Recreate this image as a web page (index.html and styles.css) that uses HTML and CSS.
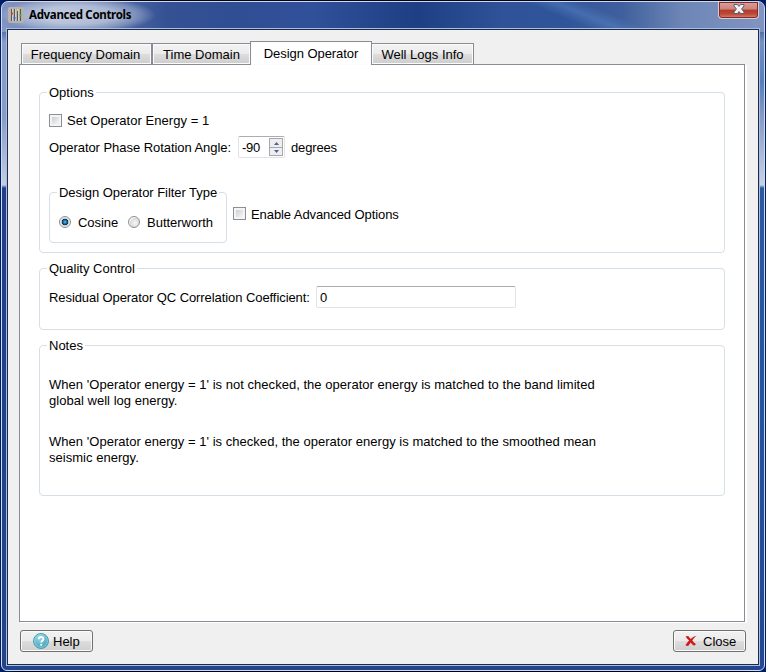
FILE: index.html
```
<!DOCTYPE html>
<html lang="en">
<head>
<meta charset="utf-8">
<title>Advanced Controls</title>
<link rel="stylesheet" href="styles.css">
</head>
<body>
<div class="window">
  <header class="titlebar">
    <svg class="app-icon" width="16" height="16" viewBox="0 0 16 16">
      <rect width="16" height="16" rx="2" fill="#b4b3af"/>
      <path d="M3.500 2v12M6.500 2v12M9.500 2v12M12.500 2v12" stroke="#5a5653"/>
      <path d="M4.500 2v12M7.500 2v12M10.500 2v12" stroke="#d0cfca"/>
      <path d="M3 6.500h2" stroke="#d93a3a" stroke-width="2"/>
      <path d="M5.500 11h2" stroke="#3c6fe0" stroke-width="2"/>
      <path d="M9 3h2" stroke="#e0d84a" stroke-width="2"/>
      <path d="M11.500 8.500h2" stroke="#42b840" stroke-width="2"/>
    </svg>
    <h1 class="title">Advanced Controls</h1>
    <button class="win-close" aria-label="Close window">
      <svg width="12" height="10" viewBox="0 0 12 10">
        <path d="M1 .5h3.300L6 2.400 7.700.5H11v1.400L8.600 5 11 8v1.500H7.700L6 7.600 4.300 9.500H1V8L3.400 5 1 1.900z" fill="#f4f4f4" stroke="#575c6c"/>
      </svg>
    </button>
  </header>
  <main class="client">
    <nav class="tabs">
      <button class="tab tab-frequency">Frequency Domain</button>
      <button class="tab tab-time">Time Domain</button>
      <button class="tab tab-design selected">Design Operator</button>
      <button class="tab tab-logs">Well Logs Info</button>
    </nav>
    <section class="pane">
      <fieldset class="group options">
        <legend>Options</legend>
        <label class="row energy"><span class="check"></span><span>Set Operator Energy = 1</span></label>
        <div class="row angle">
          <span class="angle-label">Operator Phase Rotation Angle:</span>
          <span class="spinner"><span class="value">-90</span>
            <span class="arrows">
              <span class="arrow"><svg width="5" height="3" viewBox="0 0 5 3"><path d="M0 3 2.500 0 5 3z" fill="#4a5fa8"/></svg></span>
              <span class="arrow"><svg width="5" height="3" viewBox="0 0 5 3"><path d="M0 0h5L2.500 3z" fill="#4a5fa8"/></svg></span>
            </span>
          </span>
          <span class="unit">degrees</span>
        </div>
        <div class="filter-row">
          <fieldset class="group filter">
            <legend>Design Operator Filter Type</legend>
            <div class="radios">
              <label class="row"><span class="radio on"></span><span>Cosine</span></label>
              <label class="row"><span class="radio"></span><span>Butterworth</span></label>
            </div>
          </fieldset>
          <label class="row advanced"><span class="check"></span><span>Enable Advanced Options</span></label>
        </div>
      </fieldset>
      <fieldset class="group quality">
        <legend>Quality Control</legend>
        <div class="row">
          <span class="residual-label">Residual Operator QC Correlation Coefficient:</span>
          <span class="field">0</span>
        </div>
      </fieldset>
      <fieldset class="group notes">
        <legend>Notes</legend>
        <p>When 'Operator energy = 1' is not checked, the operator energy is matched to the band limited<br>global well log energy.</p>
        <p>When 'Operator energy = 1' is checked, the operator energy is matched to the smoothed mean<br>seismic energy.</p>
      </fieldset>
    </section>
    <footer class="actions">
      <button class="push">
        <svg width="16" height="16" viewBox="0 0 16 16">
          <defs><radialGradient id="aqua" cx=".4" cy=".3" r=".75"><stop offset="0" stop-color="#96dbe8"/><stop offset="1" stop-color="#3999b2"/></radialGradient></defs>
          <circle cx="8" cy="8" r="7.500" fill="url(#aqua)" stroke="#4b9fb3"/>
          <circle cx="8" cy="8" r="6.300" fill="none" stroke="#a8dfe9" stroke-width=".7"/>
          <path d="M5.700 6.200C5.800 3.200 10.600 3.300 10.400 6.100 10.300 7.700 8.200 7.800 8.200 9.600" fill="none" stroke="#fff" stroke-width="1.800"/>
          <circle cx="8.200" cy="11.800" r="1.100" fill="#fff"/>
        </svg>
        <span>Help</span>
      </button>
      <button class="push close">
        <svg width="16" height="16" viewBox="0 0 16 16">
          <path d="M2.500 3.500 5.200 3.100C6 4.300 6.700 5.200 7.800 6.100 9.300 4.700 11 3.400 13.500 2.800 11.800 4.300 10.300 5.700 9.300 7.400 10.300 8.800 11.500 10.100 13 11.300L11 12.700C9.600 11.700 8.500 10.500 7.700 9.400 6.500 10.700 5.800 11.900 5.200 13L2.500 12.500C3.400 10.700 4.800 9 6.200 7.600 4.800 6.400 3.600 5 2.500 3.500z" fill="#d01818"/>
        </svg>
        <span>Close</span>
      </button>
    </footer>
  </main>
</div>
</body>
</html>
```
FILE: styles.css
```
* { box-sizing: border-box; }
body {
  margin: 0;
  width: 766px;
  height: 672px;
  padding: 1px;
  overflow: hidden;
  background: linear-gradient(90deg, #001f70 0, #000014 3%, #000014 97%, #001f70 100%);
  font: 13px/15px "Liberation Sans", Arial, sans-serif;
  color: #000;
}
h1, p { margin: 0; }
button { font: inherit; color: inherit; margin: 0; padding: 0; }
svg { display: block; flex: none; }

.window {
  width: 764px;
  height: 670px;
  padding: 0 5px 5px;
  border: 1px solid #cbdcef;
  border-radius: 7px 7px 6px 6px;
  background:
    linear-gradient(#8396c300 0, #8396c300 18px, #8a9bc8 40px, #8a9bc8 115px, #c6cde2 183px, #536ca9 185px, #223f88 186px, #244487 100%) left 0 top 0 / 5px 100% no-repeat,
    linear-gradient(#7b90be00 0, #7b90be00 18px, #7890c1 40px, #587fba 80px, #8198c3 110px, #c9d2e4 183px, #2b5aa1 186px, #2453a0 420px, #24478f 100%) right 0 top 0 / 6px 100% no-repeat,
    radial-gradient(closest-side, #ffffff94 0, #ffffff80 50%, #ffffff40 80%, transparent 100%) -2px -5px / 156px 36px no-repeat,
    linear-gradient(22deg, transparent 36%, #5683c480 50%, transparent 64%) 515px 0 / 140px 27px no-repeat,
    linear-gradient(90deg, #8093bf 0, #7086b6 60px, #4d68a3 120px, #345194 165px, #304e93 230px, #30509a 310px, #1e3f83 415px, #2f5298 500px, #305499 560px, #3f609d 620px, #6d86b6 680px, #8295c3 762px) 0 0 / 100% 30px no-repeat,
    #24468f;
}
.titlebar {
  display: flex;
  height: 27px;
  padding: 5px 0 0 1px;
}
.title {
  margin-left: 5px;
  font: bold 11.500px/16px "Noto Sans", sans-serif;
  letter-spacing: -.32px;
}
.win-close {
  display: flex;
  justify-content: center;
  width: 41px;
  height: 17px;
  margin: -5px 0 0 auto;
  padding-top: 2px;
  border: 1px solid #e2c7cc;
  border-top: 0;
  border-radius: 0 0 4px 4px;
  background: linear-gradient(#d8a49c 0, #cf8177 45%, #b53a2d 50%, #bd4a38 75%, #d88772 100%);
  box-shadow: inset 0 0 0 1px #7d2c2f;
}
.client {
  height: 636px;
  border: 1px solid #1b2b52;
  outline: 1px solid #a9bedb;
  background: #f0f0f0;
  padding: 11px 12px 0 11px;
}

.tabs {
  display: flex;
  align-items: flex-end;
  height: 24px;
  padding-left: 2px;
  margin-bottom: -1px;
  position: relative;
}
.tab {
  height: 22px;
  border: 1px solid #898c95;
  background: linear-gradient(#f3f3f3 0, #ebebeb 49%, #dddddd 50%, #cdcdcd 100%);
  box-shadow: inset 0 0 0 1px #fbfbfb;
  padding-top: 1px;
  white-space: nowrap;
}
.tab-frequency { width: 131px; padding-right: 2px; letter-spacing: -.03px; }
.tab-time { width: 99px; }
.tab-design { width: 122px; margin-left: -1px; letter-spacing: -.05px; }
.tab-logs { width: 103px; margin-left: -1px; }
.tab.selected { height: 24px; padding: 0 0 1px; background: #fff; border-bottom: 0; z-index: 1; }
.pane {
  width: 726px;
  height: 558px;
  border: 1px solid #898c95;
  background: #fff;
  box-shadow: 2px 1px 0 #fff;
  padding: 20px 19px 0;
}

.group {
  min-width: 0;
  margin: 0;
  padding: 0 9px;
  border: 1px solid #d5dfe5;
  border-radius: 4px;
}
.group legend { padding: 0 2px; margin-left: -2px; height: 15px; }
.row { display: flex; align-items: center; }
.options { height: 168px; }
.energy { margin-top: 13px; height: 15px; gap: 5px; letter-spacing: .04px; }
.energy .check { margin-top: -1px; }
.angle { margin-top: 8px; height: 22px; }
.angle-label { width: 189px; white-space: nowrap; letter-spacing: -.05px; }
.spinner {
  display: flex;
  align-items: center;
  width: 47px;
  height: 22px;
  margin-right: 6px;
  padding-left: 3px;
  border: 1px solid #e2e3ea;
  border-top-color: #abadb3;
  border-radius: 2px;
}
.value { flex: 1; letter-spacing: -.3px; }
.unit { letter-spacing: -.15px; }
.arrows { width: 14px; height: 18px; border: 1px solid #a8a8a8; margin-right: 1px; }
.arrow { display: flex; align-items: center; justify-content: center; height: 8px; background: #eee; }
.arrow + .arrow { border-top: 1px solid #a8a8a8; }
.check {
  width: 13px;
  height: 13px;
  border: 1px solid #8e8f8f;
  background: linear-gradient(135deg, #cbcfd5, #f6f6f6) content-box, #f4f4f4;
  padding: 2px;
}
.radio {
  width: 12px;
  height: 12px;
  margin-top: -1px;
  border: 1px solid #8e8f8f;
  border-radius: 50%;
  background: radial-gradient(circle at 60% 60%, #f7f7f7 0, #d8dadd 55%, #f4f4f4 60%);
}
.radio.on { background: radial-gradient(circle, #5ccaf0 0, #197db0 1.500px, #102e52 3px, #c9d3d9 3.600px, #f4f4f4 5px); }
.filter-row { display: flex; margin-top: 27px; }
.filter { width: 178px; height: 58px; }
.filter legend { white-space: nowrap; letter-spacing: -.05px; }
.radios { display: flex; margin-top: 15px; gap: 10px; letter-spacing: -.06px; }
.radios .row { gap: 7px; height: 15px; }
.advanced { height: 15px; margin: 22px 0 0 6px; gap: 5px; letter-spacing: -.08px; }
.advanced .check { margin-top: -2px; }
.quality { height: 69px; margin-top: 8px; }
.quality .row { margin-top: 10px; }
.residual-label { width: 267px; white-space: nowrap; letter-spacing: -.075px; }
.field {
  width: 200px;
  height: 22px;
  padding: 3px;
  border: 1px solid #e2e3ea;
  border-top-color: #abadb3;
  border-radius: 2px;
}
.notes { height: 158px; margin-top: 8px; }
.notes p { line-height: 16px; white-space: nowrap; margin-top: 24px; letter-spacing: .03px; }
.notes p + p { margin-top: 25px; }

.actions { display: flex; justify-content: space-between; padding: 8px 0 0 1px; }
.push {
  display: flex;
  align-items: center;
  width: 73px;
  height: 22px;
  padding: 0 0 0 12px;
  gap: 4px;
  border: 1px solid #707070;
  border-radius: 3px;
  background: linear-gradient(#f2f2f2 0, #ebebeb 49%, #dddddd 50%, #cfcfcf 100%);
  box-shadow: inset 0 0 0 1px #fafafa;
}
.close { gap: 4px; padding-left: 9px; }
```
